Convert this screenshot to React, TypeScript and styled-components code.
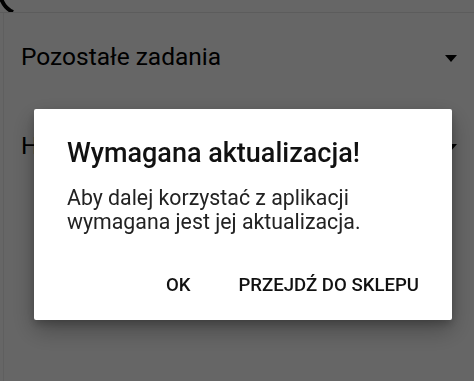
import React from "react";
import styled, { createGlobalStyle } from "styled-components";

const GlobalStyle = createGlobalStyle`
  html, body {
    margin: 0;
    padding: 0;
    width: 474px;
    height: 381px;
    overflow: hidden;
    background: #ffffff;
    font-family: Roboto, "Noto Sans", Arial, sans-serif;
  }
`;

interface Section {
  title: string;
}

const sections: Section[] = [
  { title: "Pozostałe zadania" },
  { title: "Historia zadań" },
];

const App: React.FC = () => {
  return (
    <>
      <GlobalStyle />
      <Screen>
        <Header>
          <Spinner width={40} height={40} viewBox="0 0 40 40">
            <path d="M 2 -14 A 22 22 0 0 0 14 12" fill="none" stroke="#000" strokeWidth={4} />
          </Spinner>
        </Header>
        <List>
          {sections.map((s) => (
            <Row key={s.title}>
              <RowTitle>{s.title}</RowTitle>
              <Caret />
            </Row>
          ))}
        </List>
      </Screen>
      <Scrim>
        <Dialog>
          <Title>Wymagana aktualizacja!</Title>
          <Message>
            Aby dalej korzystać z aplikacji
            <br />
            wymagana jest jej aktualizacja.
          </Message>
          <Actions>
            <ActionButton>OK</ActionButton>
            <ActionButton>PRZEJDŹ DO SKLEPU</ActionButton>
          </Actions>
        </Dialog>
      </Scrim>
    </>
  );
};

const Screen = styled.div`
  position: relative;
  width: 474px;
  height: 381px;
  display: flex;
  flex-direction: column;
`;

const Header = styled.div`
  height: 12px;
  border-bottom: 1px solid #e6e6e6;
  overflow: hidden;
`;

const Spinner = styled.svg`
  display: block;
  margin-left: -1px;
`;

const List = styled.div`
  flex: 1;
  margin-left: 3px;
  border-left: 1px solid #eeeeee;
  display: flex;
  flex-direction: column;
  padding-top: 29px;
`;

const Row = styled.div`
  height: 89px;
  display: flex;
  align-items: flex-start;
  justify-content: space-between;
  padding: 0 17px 0 17px;
`;

const RowTitle = styled.span`
  font-size: 24.5px;
  line-height: 30px;
  color: #000;
`;

const Caret = styled.span`
  width: 0;
  height: 0;
  margin-top: 13px;
  border-left: 6.5px solid transparent;
  border-right: 6.5px solid transparent;
  border-top: 7px solid #000;
`;

const Scrim = styled.div`
  position: fixed;
  inset: 0;
  background: rgba(0, 0, 0, 0.6);
  display: flex;
  align-items: flex-start;
  padding: 109px 0 0 34px;
`;

const Dialog = styled.div`
  width: 418px;
  height: 211px;
  box-sizing: border-box;
  background: #ffffff;
  border-radius: 2px;
  box-shadow: 0 10px 24px rgba(0, 0, 0, 0.3), 0 4px 8px rgba(0, 0, 0, 0.2);
  padding: 28px 33px 0 33px;
  display: flex;
  flex-direction: column;
`;

const Title = styled.div`
  font-size: 27px;
  line-height: 32px;
  font-weight: 500;
  color: #111;
`;

const Message = styled.div`
  margin-top: 17px;
  font-size: 21.3px;
  line-height: 24px;
  color: #222;
`;

const Actions = styled.div`
  margin-top: 39px;
  display: flex;
  justify-content: flex-end;
  gap: 48px;
`;

const ActionButton = styled.span`
  font-size: 18.6px;
  line-height: 24px;
  font-weight: 500;
  color: #111;
`;

export default App;
